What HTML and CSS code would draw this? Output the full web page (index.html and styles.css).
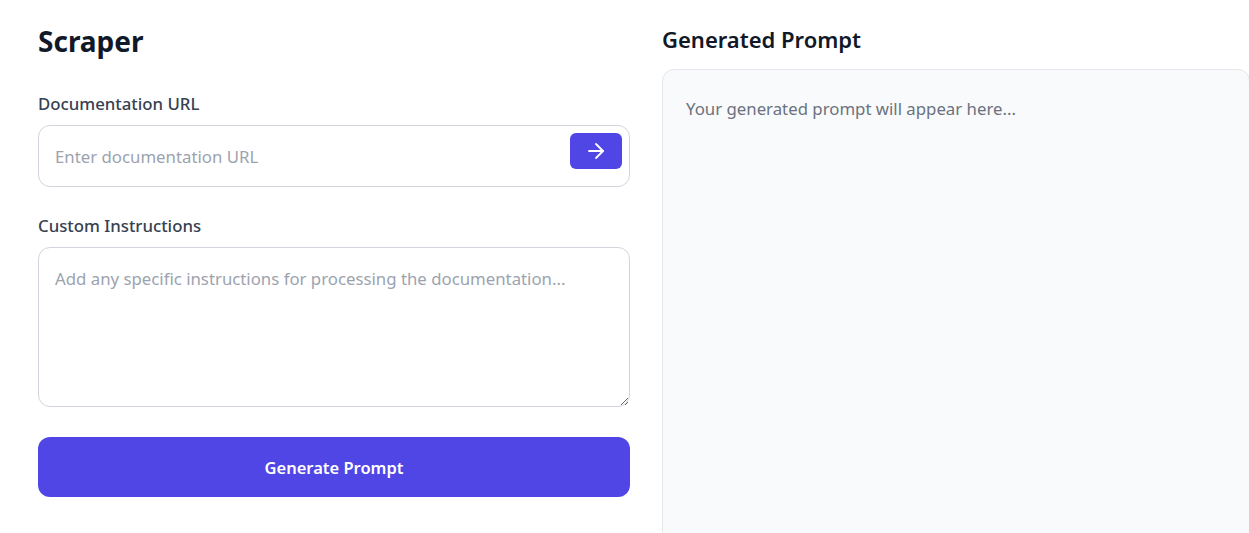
FILE: index.html
```html
<!DOCTYPE html>
<html lang="en">
<head>
<meta charset="utf-8">
<title>Scraper</title>
<link rel="stylesheet" href="styles.css">
</head>
<body>
<div class="page">
  <section class="left">
    <h1 class="title">Scraper</h1>
    <label class="label" for="url">Documentation URL</label>
    <div class="url-box">
      <input id="url" class="url-input" type="text" placeholder="Enter documentation URL">
      <button class="go-btn" type="button" aria-label="Go">
        <svg width="24" height="24" viewBox="0 0 24 24" fill="none" stroke="#ffffff" stroke-width="1.8" stroke-linecap="round" stroke-linejoin="round"><path d="M5 12h14"/><path d="M12 5l7 7-7 7"/></svg>
      </button>
    </div>
    <label class="label label-2" for="instr">Custom Instructions</label>
    <textarea id="instr" class="instr" placeholder="Add any specific instructions for processing the documentation..."></textarea>
    <button class="generate" type="button">Generate Prompt</button>
  </section>
  <section class="right">
    <h2 class="subtitle">Generated Prompt</h2>
    <div class="output">
      <p class="output-text">Your generated prompt will appear here...</p>
    </div>
  </section>
</div>
</body>
</html>
```
FILE: styles.css
```css
html, body {
  margin: 0;
  padding: 0;
  background: #ffffff;
  overflow: hidden;
}
body {
  font-family: "Noto Sans", "Open Sans", sans-serif;
  color: #111827;
}
.page {
  display: grid;
  grid-template-columns: 592px 600px;
  column-gap: 32px;
  padding: 21px 0 0 38px;
  align-items: start;
}
.left {
  display: flex;
  flex-direction: column;
}
.title {
  margin: 0;
  font-size: 28px;
  line-height: 40px;
  font-weight: 700;
  color: #111827;
}
.label {
  display: block;
  margin-top: 31px;
  font-size: 16.8px;
  line-height: 24px;
  font-weight: 500;
  color: #374151;
}
.label-2 {
  margin-top: 27px;
}
.url-box {
  margin-top: 9px;
  height: 62px;
  box-sizing: border-box;
  border: 1px solid #d1d5db;
  border-radius: 12px;
  display: flex;
  align-items: flex-start;
  padding: 7px 7px 0 16px;
  gap: 8px;
}
.url-input {
  flex: 1;
  align-self: center;
  margin-top: -7px;
  border: 0;
  outline: none;
  font-family: inherit;
  font-size: 16.8px;
  color: #111827;
  background: transparent;
  padding: 0;
}
.url-input::placeholder,
.instr::placeholder {
  color: #9ca3af;
}
.go-btn {
  width: 52px;
  height: 36px;
  border: 0;
  border-radius: 6px;
  background: #4f46e5;
  display: flex;
  align-items: center;
  justify-content: center;
  padding: 0;
}
.instr {
  margin-top: 9px;
  height: 160px;
  box-sizing: border-box;
  border: 1px solid #d1d5db;
  border-radius: 12px;
  padding: 18px 16px;
  font-family: inherit;
  font-size: 16.8px;
  line-height: 26px;
  color: #111827;
  outline: none;
  resize: vertical;
}
.generate {
  margin-top: 30px;
  height: 60px;
  border: 0;
  border-radius: 12px;
  background: #4f46e5;
  color: #ffffff;
  font-family: inherit;
  font-size: 16.5px;
  font-weight: 600;
}
.right {
  display: flex;
  flex-direction: column;
}
.subtitle {
  margin: 2px 0 0;
  font-size: 22px;
  line-height: 32px;
  font-weight: 600;
  color: #111827;
}
.output {
  margin-top: 14px;
  min-height: 500px;
  box-sizing: border-box;
  width: 588px;
  background: #f9fafb;
  border: 1px solid #e5e7eb;
  border-radius: 12px;
  padding: 26px 23px;
}
.output-text {
  margin: 0;
  font-size: 16.8px;
  line-height: 26px;
  color: #6b7280;
}
```
